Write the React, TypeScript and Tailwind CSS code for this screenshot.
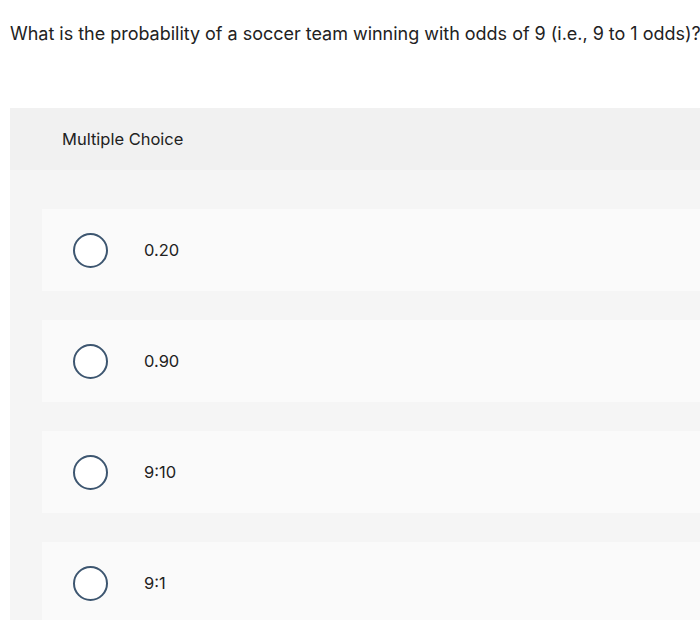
const options = ['0.20', '0.90', '9:10', '9:1'];

function Radio() {
  return <span className="block h-[35px] w-[35px] shrink-0 rounded-full border-2 border-[#3d5670] bg-white" />;
}

export default function App() {
  return (
    <div className="min-h-[620px] overflow-hidden bg-white text-[#222]" style={{ fontFamily: 'Inter, "Liberation Sans", sans-serif' }}>
      <h1 className="whitespace-nowrap pl-[10px] pt-[22px] text-[18px] leading-[24px] tracking-[-0.02px]">
        What is the probability of a soccer team winning with odds of 9 (i.e., 9 to 1 odds)?
      </h1>

      <div className="ml-[10px] mt-[62px] bg-[#f5f5f5]">
        <div className="flex h-[62px] items-center bg-[#f1f1f1] pl-[52px] text-[16.5px]">Multiple Choice</div>
        <div className="flex flex-col gap-[29px] pl-[32px] pt-[39px]">
          {options.map((o) => (
            <div key={o} className="flex h-[82px] items-center bg-[#fafafa] pl-[31px]">
              <Radio />
              <span className="ml-[36px] text-[16.5px]">{o}</span>
            </div>
          ))}
        </div>
      </div>
    </div>
  );
}
